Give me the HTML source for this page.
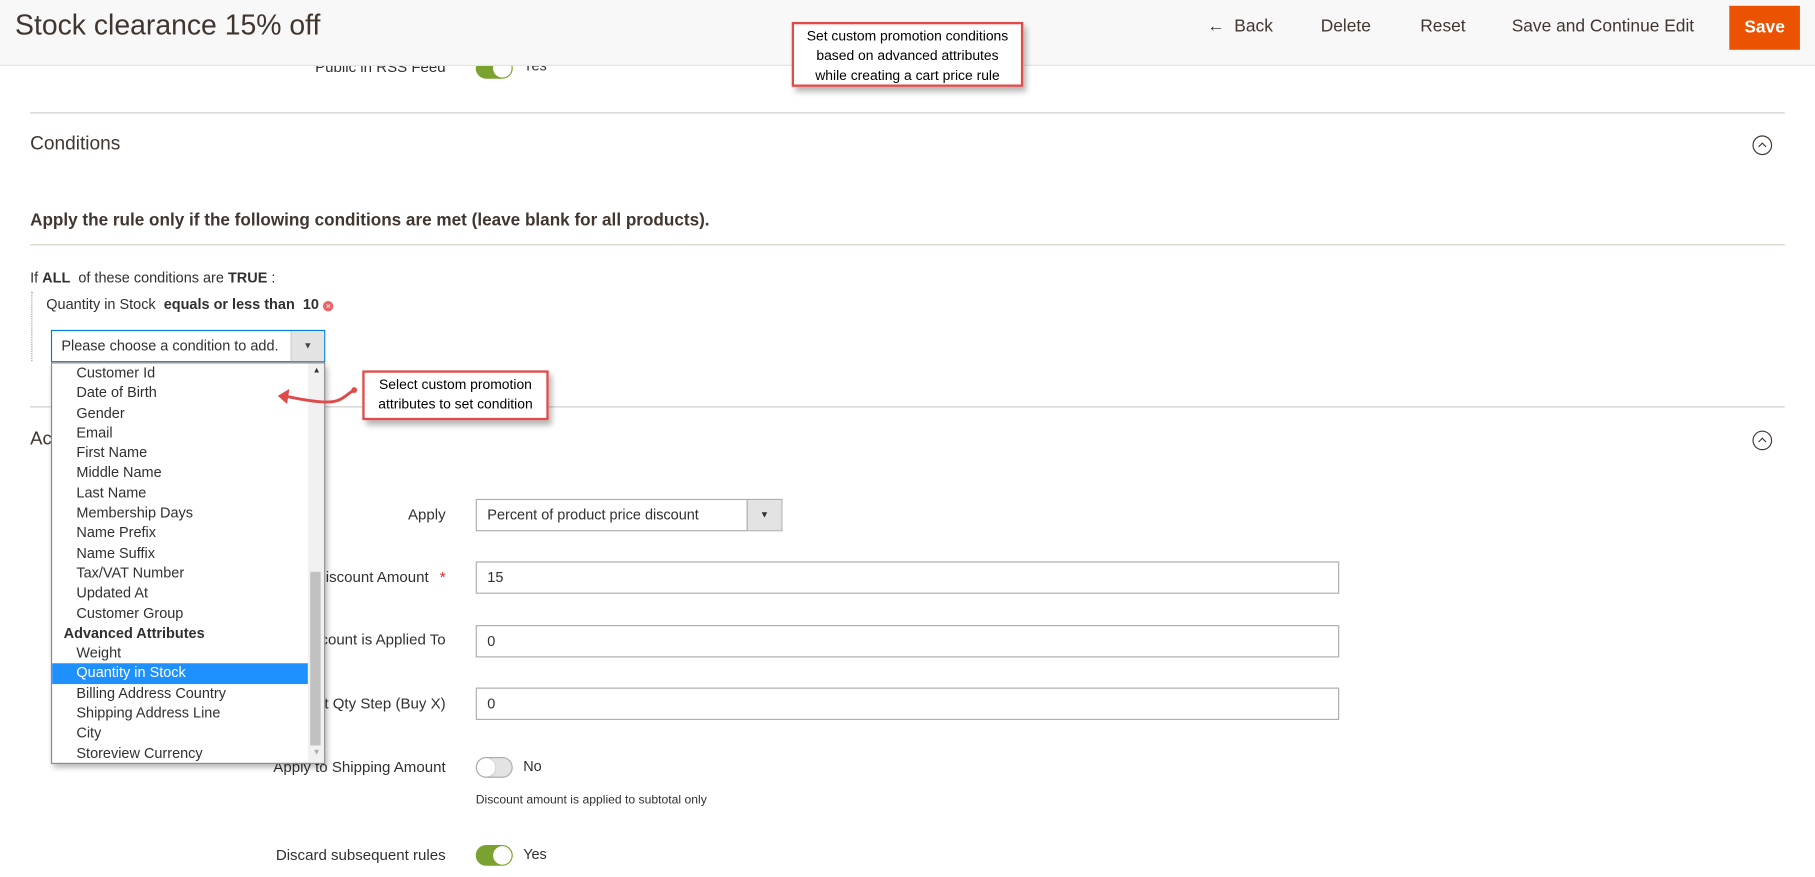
<!DOCTYPE html>
<html><head><meta charset="utf-8"><style>
html,body{margin:0;padding:0;width:1815px;height:877px;overflow:hidden;background:#fff}
#w{position:absolute;left:0;top:0;width:1568px;height:758px;transform:scale(1.1575);transform-origin:0 0;font-family:"Liberation Sans",sans-serif;color:#303030}
.a{position:absolute;white-space:nowrap}
.hdr{position:absolute;left:0;top:0;width:1568px;height:56px;background:#f8f8f8;border-bottom:1px solid #e3e3e3}
.btn{position:absolute;top:14px;font-size:15px;color:#41362f}
.line{position:absolute;left:26px;width:1516px;height:1px;background:#ccc}
.lbl{position:absolute;right:1183px;font-size:13px;color:#303030;white-space:nowrap}
.inp{position:absolute;left:411px;width:746px;height:28px;border:1px solid #adadad;background:#fff;font-size:12.5px;line-height:26px;padding-left:9px;box-sizing:border-box}
.tog{position:absolute;left:411px;width:32px;height:18px;border-radius:10px}
.tog i{position:absolute;top:1px;width:16px;height:16px;border-radius:50%;background:#fff}
.circ{position:absolute;left:1514px;width:15px;height:15px;border:1px solid #41362f;border-radius:50%}
.circ:after{content:"";position:absolute;left:5px;top:6px;width:4px;height:4px;border-left:1px solid #41362f;border-top:1px solid #41362f;transform:rotate(45deg)}
.call{position:absolute;background:#fff;border:2px solid #e04a4a;box-shadow:3px 4px 5px rgba(0,0,0,.3);font-size:12px;color:#000;text-align:center;line-height:17px;box-sizing:border-box;z-index:6}
.dd{position:absolute;left:44px;top:313px;width:237px;height:347px;background:#fff;border:1px solid #888;box-sizing:border-box;box-shadow:2px 3px 5px rgba(0,0,0,.3);overflow:hidden;z-index:4}
.it{height:17.3px;line-height:17.3px;font-size:12.5px;padding-left:21px;color:#303030;white-space:nowrap;width:221px;box-sizing:border-box}
svg{z-index:7}
</style></head><body><div id="w">
<div class="lbl" style="top:50px">Public in RSS Feed</div>
<div class="tog" style="top:50px;background:#79a22e"><i style="left:15px"></i></div>
<div class="a" style="left:452px;top:50px;font-size:12.5px">Yes</div>

<div class="hdr"></div>
<div class="a" style="left:13px;top:9px;font-size:24.5px;color:#41362f">Stock clearance 15% off</div>
<div class="btn" style="left:1043px">&#8592;&nbsp; Back</div>
<div class="btn" style="left:1141px">Delete</div>
<div class="btn" style="left:1227px">Reset</div>
<div class="btn" style="left:1306px">Save and Continue Edit</div>
<div class="a" style="left:1494px;top:5px;width:61px;height:38px;background:#eb5202;color:#fff;font-weight:bold;font-size:15px;line-height:38px;text-align:center">Save</div>

<div class="call" style="left:684px;top:19px;width:200px;height:56px;padding-top:2px">Set custom promotion conditions<br>based on advanced attributes<br>while creating a cart price rule</div>

<div class="line" style="top:97px"></div>
<div class="a" style="left:26px;top:115px;font-size:16.5px;color:#41362f">Conditions</div>
<div class="circ" style="top:117px"></div>
<div class="a" style="left:26px;top:183px;font-size:14.8px;font-weight:bold;color:#41362f">Apply the rule only if the following conditions are met (leave blank for all products).</div>
<div class="line" style="top:211px;background:#d6d0c4"></div>
<div class="a" style="left:26px;top:233px;font-size:12.5px">If <b>ALL</b>&nbsp; of these conditions are <b>TRUE</b> :</div>
<div class="a" style="left:27px;top:252px;height:60px;border-left:1px dotted #999"></div>
<div class="a" style="left:40px;top:256px;font-size:12.5px">Quantity in Stock&nbsp; <b>equals or less than</b>&nbsp; <b>10</b> <span style="display:inline-block;width:9px;height:9px;border-radius:50%;background:#e9636a;color:#fff;font-size:8px;line-height:9px;text-align:center;vertical-align:0">×</span></div>
<div class="a" style="left:44px;top:285px;width:237px;height:28px;border:1px solid #007bdb;box-sizing:border-box;background:#fff;font-size:12.5px;line-height:26px;padding-left:8px">Please choose a condition to add.<div style="position:absolute;right:0;top:0;width:28px;height:26px;background:#e3e3e3;border-left:1px solid #ccc;text-align:center;font-size:8px;color:#444">&#9660;</div></div>

<div class="line" style="top:351px"></div>
<div class="a" style="left:26px;top:371px;font-size:16px;color:#41362f">Actions</div>
<div class="circ" style="top:372px"></div>

<div class="dd">
<div style="position:absolute;right:0;top:0;width:14px;height:345px;background:#f1f1f1"></div>
<div style="position:absolute;right:3px;top:180px;width:9px;height:150px;background:#c1c1c1"></div>
<div style="position:absolute;right:3px;top:3px;font-size:7px;color:#333">&#9650;</div>
<div style="position:absolute;right:3px;top:333px;font-size:7px;color:#aaa">&#9660;</div>
<div>
<div class="it">Customer Id</div><div class="it">Date of Birth</div><div class="it">Gender</div><div class="it">Email</div><div class="it">First Name</div><div class="it">Middle Name</div><div class="it">Last Name</div><div class="it">Membership Days</div><div class="it">Name Prefix</div><div class="it">Name Suffix</div><div class="it">Tax/VAT Number</div><div class="it">Updated At</div><div class="it">Customer Group</div>
<div class="it" style="padding-left:10px;font-weight:bold">Advanced Attributes</div>
<div class="it">Weight</div><div class="it" style="background:#1e90ff;color:#fff">Quantity in Stock</div><div class="it">Billing Address Country</div><div class="it">Shipping Address Line</div><div class="it">City</div><div class="it">Storeview Currency</div>
</div></div>

<div class="call" style="left:313px;top:320px;width:161px;height:43px;padding-top:2px">Select custom promotion<br>attributes to set condition</div>
<svg class="a" style="left:230px;top:325px" width="90" height="30"><path d="M76 12 C68 16 66 24 46 22 C32 21 22 18 14 17" fill="none" stroke="#e04a4a" stroke-width="2.5"/><circle cx="76" cy="12" r="2.5" fill="#e04a4a"/><path d="M10 17 L20 11 L18 24 Z" fill="#e04a4a"/></svg>

<div class="lbl" style="top:437px">Apply</div>
<div class="a" style="left:411px;top:431px;width:265px;height:28px;border:1px solid #adadad;box-sizing:border-box;font-size:12.5px;line-height:26px;padding-left:9px">Percent of product price discount<div style="position:absolute;right:0;top:0;width:29px;height:26px;background:#e3e3e3;border-left:1px solid #adadad;text-align:center;font-size:8px">&#9660;</div></div>
<div class="lbl" style="top:491px">Discount Amount <span style="color:#e22626;margin-left:6px">*</span></div>
<div class="inp" style="top:485px">15</div>
<div class="lbl" style="top:545px">Maximum Qty Discount is Applied To</div>
<div class="inp" style="top:540px">0</div>
<div class="lbl" style="top:600px">Discount Qty Step (Buy X)</div>
<div class="inp" style="top:594px">0</div>
<div class="lbl" style="top:655px">Apply to Shipping Amount</div>
<div class="tog" style="top:654px;background:#e3e3e3;border:1px solid #adadad;box-sizing:border-box"><i style="left:0;top:0;box-shadow:0 0 1px #888"></i></div>
<div class="a" style="left:452px;top:655px;font-size:12.5px">No</div>
<div class="a" style="left:411px;top:685px;font-size:10.5px">Discount amount is applied to subtotal only</div>
<div class="lbl" style="top:731px">Discard subsequent rules</div>
<div class="tog" style="top:730px;background:#79a22e"><i style="left:15px"></i></div>
<div class="a" style="left:452px;top:731px;font-size:12.5px">Yes</div>
</div>
</body></html>
